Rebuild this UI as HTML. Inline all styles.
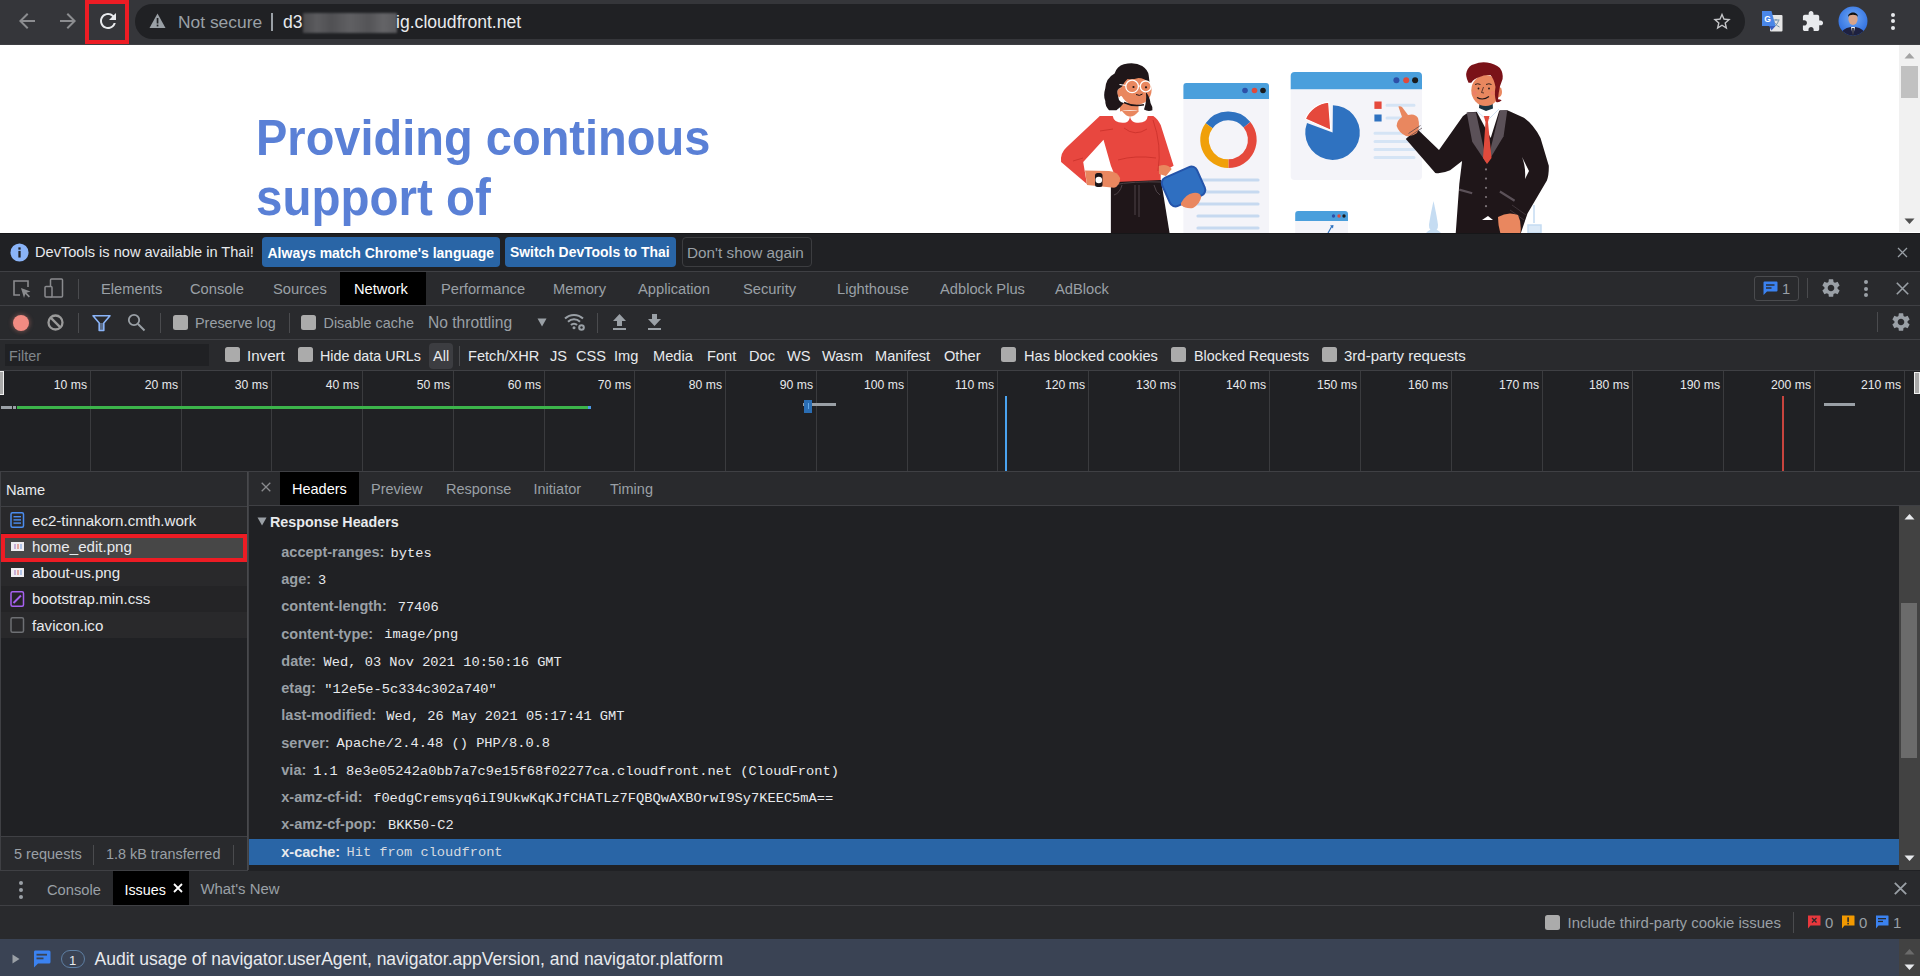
<!DOCTYPE html>
<html><head><meta charset="utf-8"><style>
html,body{margin:0;padding:0;width:1920px;height:976px;overflow:hidden;background:#202124;}
.t{position:absolute;white-space:pre;line-height:1;font-family:"Liberation Sans",sans-serif;}
.r{position:absolute;}
svg.r{display:block;overflow:visible;}
</style></head><body>
<div class="r" style="left:0px;top:0px;width:1920px;height:45px;background:#35363a;"></div>
<div class="r" style="left:0px;top:44px;width:1920px;height:1px;background:#3e3f43;"></div>
<div class="r" style="left:135px;top:4px;width:1610px;height:34.5px;background:#202124;border-radius:17.25px;"></div>
<div class="r" style="left:85px;top:0px;width:44px;height:44px;background:transparent;border:4px solid #ed1c24;box-sizing:border-box;"></div>
<svg class="r" style="left:15px;top:9px" width="24" height="24" viewBox="0 0 24 24"><path d="M20 11H7.83l5.59-5.59L12 4l-8 8 8 8 1.41-1.41L7.83 13H20v-2z" fill="#8c8d90"/></svg>
<svg class="r" style="left:56px;top:9px" width="24" height="24" viewBox="0 0 24 24"><path d="M4 11h12.17l-5.59-5.59L12 4l8 8-8 8-1.41-1.41L16.17 13H4v-2z" fill="#8c8d90"/></svg>
<svg class="r" style="left:95.5px;top:9px" width="24" height="24" viewBox="0 0 24 24"><path d="M17.65 6.35A7.958 7.958 0 0 0 12 4c-4.42 0-7.99 3.58-7.99 8s3.57 8 7.99 8c3.73 0 6.84-2.55 7.73-6h-2.08A5.99 5.99 0 0 1 12 18c-3.31 0-6-2.69-6-6s2.69-6 6-6c1.66 0 3.14.69 4.22 1.78L13 11h7V4l-2.35 2.35z" fill="#e8eaed"/></svg>
<svg class="r" style="left:149px;top:13px" width="17" height="16" viewBox="0 0 17 16"><path d="M8.5 0.5 L16.5 15 H0.5 Z" fill="#9aa0a6"/><rect x="7.7" y="5" width="1.7" height="5.5" fill="#202124"/><rect x="7.7" y="11.6" width="1.7" height="1.8" fill="#202124"/></svg>
<div class="t" style="left:178px;top:14.07px;font-size:17.4px;color:#9aa0a6;font-weight:normal;font-family:'Liberation Sans', sans-serif;">Not secure</div>
<div class="r" style="left:271px;top:13px;width:1.5px;height:18px;background:#9aa0a6;"></div>
<div class="t" style="left:283px;top:13.90px;font-size:17.6px;color:#e8eaed;font-weight:normal;font-family:'Liberation Sans', sans-serif;">d3</div>
<div class="r" style="left:303px;top:13px;width:94px;height:20px;background:linear-gradient(90deg,#4a4a4d,#5c5c5f 15%,#505053 30%,#606063 50%,#545457 70%,#646467 85%,#5a5a5d);filter:blur(1.2px);"></div>
<div class="t" style="left:396px;top:13.90px;font-size:17.6px;color:#e8eaed;font-weight:normal;font-family:'Liberation Sans', sans-serif;">ig.cloudfront.net</div>
<svg class="r" style="left:1711px;top:11px" width="22" height="21" viewBox="0 0 24 24"><path d="M22 9.24l-7.19-.62L12 2 9.19 8.63 2 9.24l5.46 4.73L5.82 21 12 17.27 18.18 21l-1.63-7.03L22 9.24zM12 15.4l-3.76 2.27 1-4.28-3.32-2.88 4.38-.38L12 6.1l1.71 4.04 4.38.38-3.32 2.88 1 4.28L12 15.4z" fill="#c4c5c8"/></svg>
<svg class="r" style="left:1762px;top:11px" width="21" height="21" viewBox="0 0 21 21"><rect x="8" y="4" width="12.5" height="16.5" fill="#e6e6e6" rx="1"/><path d="M10.5 9 h7 M14 8v1.5 M11.5 9.5c1 3 3 5 6 6.5 M16.5 9.5c-.8 3-2.5 5.2-5 6.5" stroke="#6b8ca3" stroke-width="1" fill="none"/><path d="M0 0 H9.5 L13.5 15 H0 Z" fill="#4a87e8"/><path d="M7 15 L13.5 15 L9.5 19.5 Z" fill="#3a5fc0"/><text x="2.2" y="11" font-family="Liberation Sans" font-weight="bold" font-size="8.5" fill="#fff">G</text></svg>
<svg class="r" style="left:1801px;top:10px" width="23" height="23" viewBox="0 0 24 24"><path d="M20.5 11H19V7c0-1.1-.9-2-2-2h-4V3.5C13 2.12 11.88 1 10.5 1S8 2.12 8 3.5V5H4c-1.1 0-1.99.9-1.99 2v3.8H3.5c1.49 0 2.7 1.21 2.7 2.7s-1.21 2.7-2.7 2.7H2V20c0 1.1.9 2 2 2h3.8v-1.5c0-1.49 1.21-2.7 2.7-2.7 1.49 0 2.7 1.21 2.7 2.7V22H17c1.1 0 2-.9 2-2v-4h1.5c1.38 0 2.5-1.12 2.5-2.5S21.88 11 20.5 11z" fill="#e8eaed"/></svg>
<svg class="r" style="left:1838px;top:6px" width="30" height="30" viewBox="0 0 30 30"><defs><radialGradient id="av" cx="50%" cy="40%" r="60%"><stop offset="0" stop-color="#6fa8f5"/><stop offset="1" stop-color="#2f6fe0"/></radialGradient><clipPath id="avc"><circle cx="15" cy="15" r="14.5"/></clipPath></defs><circle cx="15" cy="15" r="14.5" fill="url(#av)"/><g clip-path="url(#avc)"><path d="M2 30 C4 23 9 21 15 21 C21 21 26 23 28 30Z" fill="#1e2140"/><path d="M13 21 L15 30 L17 21Z" fill="#f4f4f4"/><rect x="14.2" y="22" width="1.6" height="8" fill="#1a1a2a"/><ellipse cx="15" cy="13" rx="4.6" ry="6" fill="#d9a58a"/><path d="M10 11 C10 5 20 5 20 11 C19 8 11 8 10 11Z" fill="#111"/></g></svg>
<div class="r" style="left:1890.5px;top:12.7px;width:4px;height:4px;background:#e8eaed;border-radius:50%;"></div>
<div class="r" style="left:1890.5px;top:19.2px;width:4px;height:4px;background:#e8eaed;border-radius:50%;"></div>
<div class="r" style="left:1890.5px;top:25.7px;width:4px;height:4px;background:#e8eaed;border-radius:50%;"></div>
<div class="r" style="left:0px;top:45px;width:1920px;height:188px;background:#ffffff;"></div>
<div class="r" style="left:1899px;top:45px;width:21px;height:187px;background:#f1f1f1;"></div>
<div class="r" style="left:1901px;top:66px;width:17px;height:32px;background:#c1c1c1;"></div>
<svg class="r" style="left:1904px;top:52px" width="11" height="7" viewBox="0 0 11 7"><path d="M0.5 6.5 L5.5 1 L10.5 6.5Z" fill="#a3a3a3"/></svg>
<svg class="r" style="left:1904px;top:218px" width="11" height="7" viewBox="0 0 11 7"><path d="M0.5 0.5 L5.5 6 L10.5 0.5Z" fill="#505050"/></svg>
<div class="t" style="left:256px;top:115.21px;font-size:47px;color:#5a80d6;font-weight:bold;font-family:'Liberation Sans', sans-serif;transform:scaleY(1.08);transform-origin:0 39.8px;">Providing continous</div>
<div class="t" style="left:256px;top:174.79px;font-size:47.5px;color:#5a80d6;font-weight:bold;font-family:'Liberation Sans', sans-serif;transform:scaleY(1.08);transform-origin:0 40.2px;">support of</div>
<svg class="r" style="left:1040px;top:45px" width="520" height="188" viewBox="0 0 520 188">
<defs><clipPath id="pg"><rect x="0" y="0" width="520" height="188"/></clipPath></defs>
<g clip-path="url(#pg)">
<!-- panel 1 -->
<path d="M143.4 41 Q143.4 38 146.4 38 H226 Q229 38 229 41 V54 H143.4Z" fill="#4a9fdc"/>
<rect x="143.4" y="54" width="85.6" height="140" fill="#f4f4f9"/>
<circle cx="205" cy="45.5" r="2.8" fill="#2d50a8"/><circle cx="214.5" cy="45.5" r="2.8" fill="#e04a3c"/><circle cx="223" cy="45.5" r="2.8" fill="#1b1b1b"/>
<path d="M169.1 80.8 A23.9 23.9 0 0 1 207 79.8" stroke="#2f72c0" stroke-width="8.7" fill="none"/>
<path d="M207 79.8 A23.9 23.9 0 0 1 188.4 118.7" stroke="#e5493c" stroke-width="8.7" fill="none"/>
<path d="M188.4 118.7 A23.9 23.9 0 0 1 169.1 80.8" stroke="#f0a00a" stroke-width="8.7" fill="none"/>
<g stroke="#c6d9f0" stroke-width="3.2" stroke-linecap="round"><path d="M158 135H218M158 147H218M158 159H218M158 171H218M158 183H218"/></g>
<!-- panel 2 -->
<path d="M250.7 31 Q250.7 27 254.7 27 H378 Q382 27 382 31 V44.4 H250.7Z" fill="#4a9fdc"/>
<path d="M250.7 44.4 H382 V131 Q382 135 378 135 H254.7 Q250.7 135 250.7 131Z" fill="#f4f4f9"/>
<circle cx="356.4" cy="35.2" r="3" fill="#2d50a8"/><circle cx="366.2" cy="35.2" r="3" fill="#e04a3c"/><circle cx="375.1" cy="35.2" r="3" fill="#1b1b1b"/>
<path d="M292.6 87.6 L292.9 60.3 A27.3 27.3 0 1 1 267.0 78.0 Z" fill="#2f72c0"/>
<path d="M290.8 85.3 L288.7 57.2 A28 28 0 0 0 265.3 74 Z" fill="#e5493c" stroke="#fff" stroke-width="1.2"/>
<rect x="334.4" y="56.5" width="7.2" height="7.4" fill="#e5493c"/><rect x="334.4" y="69.5" width="7.2" height="7" fill="#2f72c0"/>
<g stroke="#d5e4f5" stroke-width="3" stroke-linecap="round"><path d="M347 60.3H374M347 73H374M335 88.2H374M335 96.4H374M335 104.6H374M335 112.5H374"/></g>
<!-- bottom small panel -->
<path d="M255.2 169 Q255.2 166 258.2 166 H305 Q308 166 308 169 V176 H255.2Z" fill="#4a9fdc"/>
<rect x="255.2" y="176" width="52.8" height="14" fill="#f4f4f9"/>
<circle cx="293.5" cy="171" r="1.7" fill="#2d50a8"/><circle cx="299" cy="171" r="1.7" fill="#e04a3c"/><circle cx="304" cy="171" r="1.7" fill="#1b1b1b"/>
<path d="M288 188 L292 181" stroke="#2f72c0" stroke-width="1.2"/><path d="M290 180.5 L293.5 180 L293 183.5Z" fill="#2f72c0"/>
<!-- light blue decorations -->
<path d="M393.5 156 Q390 172 389 180 Q389 186 393.5 186 Q398 186 398 180 Q397 172 393.5 156Z" fill="#c5dcf2"/>
<path d="M386 188 Q393.5 180 401 188Z" fill="#c5dcf2"/>
<path d="M494 160 V178 M488 180 H501 V188 H488 Z" stroke="#c5dcf2" stroke-width="1.5" fill="#dbe9f7"/>
<!-- woman -->
<path d="M80 58 H98.5 V74.6 H80Z" fill="#e9875f"/>
<ellipse cx="96" cy="45" rx="15.6" ry="14.8" fill="#e9875f"/>
<ellipse cx="80.5" cy="47.8" rx="3.3" ry="4.6" fill="#e9875f"/>
<path d="M65.3 43.2 Q66 33 74.6 28.4 Q77 21 83.8 19.2 Q95 16.5 102.2 21.1 Q108 25 108.7 30.3 L109.6 37.7 Q104 33 98.5 33 Q92 35 87.5 34 Q84 37 82 41.4 L80.1 43 Q77 44 77.3 48 L79 55 Q81 58 83.8 58 Q80 63 76.4 65.3 L69 65.3 Q65 61 65.3 56.1 Q63 51 65.3 43.2Z" fill="#1f1619"/>
<path d="M105.9 46.9 Q110 52 110.5 58 Q113 62 112.4 65.3 Q108 67 104 64.5 Q107 56 105.9 46.9Z" fill="#1f1619"/>
<circle cx="92.1" cy="41.4" r="6.3" fill="none" stroke="#fff" stroke-width="1.3"/><circle cx="105.7" cy="41.4" r="5.4" fill="none" stroke="#fff" stroke-width="1.3"/>
<path d="M85.8 40.5 L79.5 39.5 M98.4 41 L100.3 41" stroke="#fff" stroke-width="1.1"/>
<circle cx="93.5" cy="42" r="1.1" fill="#1f1619"/><circle cx="106" cy="42.3" r="1.1" fill="#1f1619"/>
<path d="M96 49.5 Q99.5 51.5 102.5 49" stroke="#1f1619" stroke-width="1" fill="none"/>
<path d="M84 57.5 Q93 62 104 59.8" stroke="#1f1619" stroke-width="1.5" fill="none"/>
<circle cx="81" cy="52.2" r="1.2" fill="#fff"/>
<path d="M59.8 70.9 L113.3 70.9 Q118 74 120.7 80.1 L133.6 120.7 L120.7 128 L120.7 137.3 L78.2 139.1 L70.9 120.7 L63.5 94.8 L43.2 117 L46.9 139.1 L21.1 117 Q20 108 26.6 102.2Z" fill="#e8473f"/>
<path d="M84 83 Q95 92 107 84 M78 115 Q95 110 116 113 M113 75 Q122 100 118 126 M60 86 L73 84 M33 116 L43 113" stroke="#c9302a" stroke-width=".8" fill="none"/>
<path d="M72.7 71 Q74 79 86 77.5 Q90 76 90 70 Q90 76 95 77.5 Q107 79 107.7 71 Q103 65.3 90 65.3 Q77 65.3 72.7 71Z" fill="#fff"/>
<path d="M82 66 Q90 77 99 66Z" fill="#e9875f"/>
<path d="M70.9 137.3 L121 135 L129.9 190 L70.9 190Z" fill="#1f1619"/>
<path d="M72 140 Q95 136 121 137" stroke="#4d4246" stroke-width="1" fill="none"/>
<path d="M99 140 V172 M95 140 V170 M74 150 Q80 148 82 140 M114 140 Q116 148 120 150" stroke="#5a4f54" stroke-width=".8" fill="none"/>
<path d="M45 125.5 L69 126 Q78 127 80.1 133 Q80 141 74 142.8 L47 140Z" fill="#e9875f"/>
<rect x="55" y="128" width="7.5" height="14" rx="2.5" fill="#1f1619"/><circle cx="58.8" cy="135" r="3.3" fill="#fff"/>
<g transform="rotate(-24 143.5 141.5)"><rect x="124.5" y="126" width="38" height="31" rx="6" fill="#2f6fc1" stroke="#2454aa" stroke-width="2"/></g>
<path d="M118.8 121 Q127 118 131.7 124 L126 131 L119 129Z" fill="#e9875f"/>
<path d="M141 158 Q146 149 153 148 Q160 147 161.2 152 Q160 159 153 163 Q146 164 141 160Z" fill="#e9875f"/>
<!-- man -->
<path d="M376.9 83.8 L399 105 L423 70.9 L428.5 67.2 L467.3 65.3 L483.9 72.7 Q494 80 500.5 93 L508.8 120.7 Q509 130 506.9 135.4 L487.5 168.6 L480.2 190 L415.6 190 L419.3 139.1 L422.1 116 L410.1 125.3 Q402 129 395.3 128 L365.8 93.9Z" fill="#1f1619"/>
<path d="M482 112 Q486 122 485 134 L489 126Z" fill="#ffffff"/>
<path d="M435.9 65.3 L459.9 63.5 L450.7 93Z" fill="#ffffff"/>
<path d="M436.5 66 L446 74 M459 64 L449 74" stroke="#bcd3ec" stroke-width=".7" fill="none"/>
<path d="M426.7 67.2 L435.9 67.2 L447 118.8 L432.2 96.7Z" fill="#5b5158"/>
<path d="M459.9 65.3 L467.3 65.3 L463.6 91.2 L447 118.8Z" fill="#5b5158"/>
<path d="M443.8 71 L449.5 71 L448 77 L451.5 113 L447 119 L443 113 L445.5 77Z" fill="#e04a3c"/>
<path d="M439.6 56 H452.5 L453 63.5 L446 66 L439 63Z" fill="#1b3340"/>
<ellipse cx="445.6" cy="45.5" rx="14.3" ry="15.5" fill="#e9875f"/>
<ellipse cx="458.8" cy="46.9" rx="3.2" ry="5.2" fill="#e9875f"/>
<path d="M428.5 37.7 Q425 31 426.7 26.6 Q429 20 434.1 19.2 Q440 16.5 447 17.4 Q455 18.5 459.9 22.9 Q463.5 28 462.6 34 L459.9 41.5 Q458.5 48 458 54.3 Q460 54.5 461.7 55.2 Q459 58 456.2 57 Q454 50 455.5 42 Q454 34 450.7 30.3 Q445 29.5 439.6 32.1 Q434 34 431.3 37.7Z" fill="#7a1218"/>
<path d="M437 52.5 Q443 56 449 51.5" stroke="#1f1619" stroke-width="1.1" fill="none"/>
<path d="M435 39.5 Q437.5 38 440.5 39.5 M446 39.5 Q449 38 451.5 39.5" stroke="#1f1619" stroke-width=".9" fill="none"/>
<circle cx="438.5" cy="43.5" r=".9" fill="#1f1619"/><circle cx="449" cy="43.5" r=".9" fill="#1f1619"/>
<path d="M443.5 42 L441.5 47.5 L444 48" stroke="#1f1619" stroke-width=".7" fill="none"/>
<circle cx="434.5" cy="48" r="2" fill="#f07a6a" opacity=".6"/><circle cx="452.5" cy="48" r="2" fill="#f07a6a" opacity=".6"/>
<path d="M358.4 61.6 Q360 60.5 362 62 L368 70 Q375 68 378 73 Q380.5 82 377 88 Q372 92 366 91 Q359 88 356.6 81 Q357 75 362 72Z" fill="#e9875f"/>
<path d="M368.5 88.5 L380.5 80.5 M370 91 L382 83" stroke="#4d4246" stroke-width=".7" fill="none"/>
<path d="M419.3 144.6 L432.2 148.3 M459.9 146.5 L474.6 155.7" stroke="#5b5158" stroke-width="2.2"/>
<g fill="#7d7479"><circle cx="446" cy="124.4" r="1.1"/><circle cx="446" cy="133.6" r="1.1"/><circle cx="446" cy="142.8" r="1.1"/><circle cx="446" cy="152" r="1.1"/><circle cx="446" cy="161.2" r="1.1"/></g>
<path d="M442 175 L448 171 L453 175Z" fill="#ffffff"/>
<path d="M472 160 L486 170 M470 165 L484 175" stroke="#4d4246" stroke-width=".7" fill="none"/>
<path d="M458 172 Q468 166 478 170 Q482 178 480.2 190 L461 190 Q458 182 458 172Z" fill="#e9875f"/>
</g>
</svg>

<div class="r" style="left:0px;top:233px;width:1920px;height:38px;background:#202124;"></div>
<div class="r" style="left:0px;top:233px;width:1920px;height:1px;background:#161618;"></div>
<div class="r" style="left:0px;top:271px;width:1920px;height:1px;background:#3f4044;"></div>
<svg class="r" style="left:10px;top:243px" width="19" height="19" viewBox="0 0 20 20"><circle cx="10" cy="10" r="9.5" fill="#8ab4f8"/><rect x="8.8" y="8.3" width="2.4" height="7" fill="#202124"/><rect x="8.8" y="4.6" width="2.4" height="2.4" fill="#202124"/></svg>
<div class="t" style="left:35px;top:245.14px;font-size:14.6px;color:#e8eaed;font-weight:normal;font-family:'Liberation Sans', sans-serif;">DevTools is now available in Thai!</div>
<div class="r" style="left:262px;top:237px;width:238px;height:30px;background:#2965a6;border-radius:4px;"></div>
<div class="t" style="left:267.5px;top:245.65px;font-size:14.0px;color:#ffffff;font-weight:bold;font-family:'Liberation Sans', sans-serif;">Always match Chrome's language</div>
<div class="r" style="left:505px;top:237px;width:171px;height:30px;background:#2965a6;border-radius:4px;"></div>
<div class="t" style="left:510px;top:245.73px;font-size:13.9px;color:#ffffff;font-weight:bold;font-family:'Liberation Sans', sans-serif;">Switch DevTools to Thai</div>
<div class="r" style="left:681.5px;top:237px;width:130px;height:30px;background:transparent;border:1px solid #3c3d40;border-radius:4px;box-sizing:border-box;"></div>
<div class="t" style="left:687px;top:244.55px;font-size:15.3px;color:#9aa0a6;font-weight:normal;font-family:'Liberation Sans', sans-serif;">Don't show again</div>
<svg class="r" style="left:1897px;top:247px" width="11" height="11" viewBox="0 0 11 11"><path d="M1 1L10 10M10 1L1 10" stroke="#9aa0a6" stroke-width="1.3"/></svg>
<div class="r" style="left:0px;top:272px;width:1920px;height:33px;background:#292a2d;"></div>
<div class="r" style="left:0px;top:305px;width:1920px;height:1px;background:#3f4044;"></div>
<svg class="r" style="left:12px;top:279px" width="20" height="20" viewBox="0 0 20 20"><path d="M8 16H2V2h14v6" stroke="#8a8b8e" stroke-width="1.6" fill="none"/><path d="M9 9 L18.5 12.5 L14.5 13.8 L18 17.3 L16.8 18.5 L13.3 15 L12 19 Z" fill="#8a8b8e"/></svg>
<svg class="r" style="left:44px;top:278px" width="20" height="20" viewBox="0 0 20 20"><rect x="6.5" y="1" width="12" height="18" rx="1" stroke="#8a8b8e" stroke-width="1.5" fill="none"/><rect x="1" y="8.5" width="7" height="10.5" rx="1" stroke="#8a8b8e" stroke-width="1.5" fill="#292a2d"/></svg>
<div class="r" style="left:78px;top:279px;width:1px;height:20px;background:#4a4b4e;"></div>
<div class="r" style="left:340px;top:272px;width:86px;height:33px;background:#000000;"></div>
<div class="t" style="left:101px;top:281.86px;font-size:14.7px;color:#9aa0a6;font-weight:normal;font-family:'Liberation Sans', sans-serif;">Elements</div>
<div class="t" style="left:190px;top:281.86px;font-size:14.7px;color:#9aa0a6;font-weight:normal;font-family:'Liberation Sans', sans-serif;">Console</div>
<div class="t" style="left:273px;top:281.86px;font-size:14.7px;color:#9aa0a6;font-weight:normal;font-family:'Liberation Sans', sans-serif;">Sources</div>
<div class="t" style="left:354px;top:281.86px;font-size:14.7px;color:#ffffff;font-weight:normal;font-family:'Liberation Sans', sans-serif;">Network</div>
<div class="t" style="left:441px;top:281.86px;font-size:14.7px;color:#9aa0a6;font-weight:normal;font-family:'Liberation Sans', sans-serif;">Performance</div>
<div class="t" style="left:553px;top:281.86px;font-size:14.7px;color:#9aa0a6;font-weight:normal;font-family:'Liberation Sans', sans-serif;">Memory</div>
<div class="t" style="left:638px;top:281.86px;font-size:14.7px;color:#9aa0a6;font-weight:normal;font-family:'Liberation Sans', sans-serif;">Application</div>
<div class="t" style="left:743px;top:281.86px;font-size:14.7px;color:#9aa0a6;font-weight:normal;font-family:'Liberation Sans', sans-serif;">Security</div>
<div class="t" style="left:837px;top:281.86px;font-size:14.7px;color:#9aa0a6;font-weight:normal;font-family:'Liberation Sans', sans-serif;">Lighthouse</div>
<div class="t" style="left:940px;top:281.86px;font-size:14.7px;color:#9aa0a6;font-weight:normal;font-family:'Liberation Sans', sans-serif;">Adblock Plus</div>
<div class="t" style="left:1055px;top:281.86px;font-size:14.7px;color:#9aa0a6;font-weight:normal;font-family:'Liberation Sans', sans-serif;">AdBlock</div>
<div class="r" style="left:1754px;top:276px;width:45px;height:25px;background:transparent;border:1px solid #4a4b4e;border-radius:3px;box-sizing:border-box;"></div>
<svg class="r" style="left:1763px;top:281px" width="15" height="15" viewBox="0 0 15 15"><path d="M1.5 0.5 H13.5 A1 1 0 0 1 14.5 1.5 V9.5 A1 1 0 0 1 13.5 10.5 H4 L0.5 14 V1.5 A1 1 0 0 1 1.5 0.5Z" fill="#3b82f0"/><rect x="3" y="3.3" width="8.5" height="1.4" fill="#292a2d"/><rect x="3" y="6.3" width="5.5" height="1.4" fill="#292a2d"/></svg>
<div class="t" style="left:1782px;top:282.06px;font-size:14.7px;color:#9aa0a6;font-weight:normal;font-family:'Liberation Sans', sans-serif;">1</div>
<div class="r" style="left:1806.5px;top:278px;width:1.3px;height:20px;background:#4a4b4e;"></div>
<svg class="r" style="left:1819.5px;top:277px" width="22" height="22" viewBox="0 0 24 24"><path d="M19.14 12.94c.04-.3.06-.61.06-.94 0-.32-.02-.64-.07-.94l2.03-1.58a.49.49 0 0 0 .12-.61l-1.92-3.32a.488.488 0 0 0-.59-.22l-2.39.96c-.5-.38-1.03-.7-1.62-.94l-.36-2.54a.484.484 0 0 0-.48-.41h-3.84c-.24 0-.43.17-.47.41l-.36 2.54c-.59.24-1.13.57-1.62.94l-2.39-.96c-.22-.08-.47 0-.59.22L2.74 8.87c-.12.21-.08.47.12.61l2.03 1.58c-.05.3-.09.63-.09.94s.02.64.07.94l-2.03 1.58a.49.49 0 0 0-.12.61l1.92 3.32c.12.22.37.29.59.22l2.39-.96c.5.38 1.03.7 1.62.94l.36 2.54c.05.24.24.41.48.41h3.84c.24 0 .44-.17.47-.41l.36-2.54c.59-.24 1.13-.56 1.62-.94l2.39.96c.22.08.47 0 .59-.22l1.92-3.32c.12-.22.07-.47-.12-.61l-2.01-1.58zM12 15.6c-1.98 0-3.6-1.62-3.6-3.6s1.62-3.6 3.6-3.6 3.6 1.62 3.6 3.6-1.62 3.6-3.6 3.6z" fill="#9aa0a6"/></svg>
<div class="r" style="left:1864px;top:280px;width:4px;height:4px;background:#9aa0a6;border-radius:50%;"></div>
<div class="r" style="left:1864px;top:286.5px;width:4px;height:4px;background:#9aa0a6;border-radius:50%;"></div>
<div class="r" style="left:1864px;top:293px;width:4px;height:4px;background:#9aa0a6;border-radius:50%;"></div>
<svg class="r" style="left:1896px;top:282px" width="13" height="13" viewBox="0 0 13 13"><path d="M0.8 0.8L12.2 12.2M12.2 0.8L0.8 12.2" stroke="#9aa0a6" stroke-width="1.6"/></svg>
<div class="r" style="left:0px;top:306px;width:1920px;height:33px;background:#292a2d;"></div>
<div class="r" style="left:0px;top:339px;width:1920px;height:1px;background:#3f4044;"></div>
<div class="r" style="left:12.5px;top:314.5px;width:16px;height:16px;background:#f28b82;border-radius:50%;box-shadow:0 0 4px 1px rgba(242,139,130,.35);"></div>
<svg class="r" style="left:47px;top:314px" width="17" height="17" viewBox="0 0 17 17"><circle cx="8.5" cy="8.5" r="7" stroke="#9a9a9a" stroke-width="2.3" fill="none"/><path d="M3.6 3.6L13.4 13.4" stroke="#9a9a9a" stroke-width="2.3"/></svg>
<div class="r" style="left:78px;top:313px;width:1px;height:20px;background:#4a4b4e;"></div>
<svg class="r" style="left:92px;top:314px" width="19" height="18" viewBox="0 0 19 18"><path d="M7.5 9 H11.5 V16.3 H7.5Z" fill="#5b6d8a"/><path d="M1 1.8 H18 L11.8 9 V16.5 H7.2 V9 Z" stroke="#8ab4f8" stroke-width="1.6" fill="none" stroke-linejoin="round"/></svg>
<svg class="r" style="left:127px;top:313px" width="19" height="19" viewBox="0 0 19 19"><circle cx="7" cy="7" r="5.2" stroke="#9aa0a6" stroke-width="1.8" fill="none"/><path d="M11 11L17.5 17.5" stroke="#9aa0a6" stroke-width="2"/></svg>
<div class="r" style="left:159.5px;top:313px;width:1px;height:20px;background:#4a4b4e;"></div>
<div class="r" style="left:173px;top:315px;width:15px;height:15px;background:#ababab;border-radius:2.5px;"></div>
<div class="t" style="left:195px;top:316.41px;font-size:14.4px;color:#9aa0a6;font-weight:normal;font-family:'Liberation Sans', sans-serif;">Preserve log</div>
<div class="r" style="left:288.5px;top:313px;width:1px;height:20px;background:#4a4b4e;"></div>
<div class="r" style="left:301px;top:315px;width:15px;height:15px;background:#ababab;border-radius:2.5px;"></div>
<div class="t" style="left:323.5px;top:316.41px;font-size:14.4px;color:#9aa0a6;font-weight:normal;font-family:'Liberation Sans', sans-serif;">Disable cache</div>
<div class="t" style="left:428px;top:315.39px;font-size:15.6px;color:#9aa0a6;font-weight:normal;font-family:'Liberation Sans', sans-serif;">No throttling</div>
<svg class="r" style="left:537px;top:318px" width="10" height="9" viewBox="0 0 10 9"><path d="M0.5 0.5H9.5L5 8.5Z" fill="#9aa0a6"/></svg>
<svg class="r" style="left:564px;top:312px" width="22" height="20" viewBox="0 0 22 20"><path d="M1 6.5 A13 13 0 0 1 19 6.5" stroke="#9aa0a6" stroke-width="2" fill="none"/><path d="M4 9.8 A8.5 8.5 0 0 1 16 9.8" stroke="#9aa0a6" stroke-width="2" fill="none"/><path d="M7 13 A4 4 0 0 1 13 13" stroke="#9aa0a6" stroke-width="2" fill="none"/><circle cx="10" cy="15.8" r="1.5" fill="#9aa0a6"/><circle cx="17.5" cy="15.5" r="3.3" fill="#9aa0a6"/><circle cx="17.5" cy="15.5" r="1.2" fill="#292a2d"/></svg>
<div class="r" style="left:596.5px;top:313px;width:1px;height:20px;background:#4a4b4e;"></div>
<svg class="r" style="left:612px;top:313px" width="15" height="18" viewBox="0 0 15 18"><path d="M7.5 1 L14 8 H10 V13 H5 V8 H1Z" fill="#9aa0a6"/><rect x="1" y="15" width="13" height="2" fill="#9aa0a6"/></svg>
<svg class="r" style="left:647px;top:313px" width="15" height="18" viewBox="0 0 15 18"><path d="M7.5 13 L14 6 H10 V1 H5 V6 H1Z" fill="#9aa0a6"/><rect x="1" y="15" width="13" height="2" fill="#9aa0a6"/></svg>
<div class="r" style="left:1876.5px;top:312px;width:1.3px;height:20px;background:#4a4b4e;"></div>
<svg class="r" style="left:1889.5px;top:311px" width="22" height="22" viewBox="0 0 24 24"><path d="M19.14 12.94c.04-.3.06-.61.06-.94 0-.32-.02-.64-.07-.94l2.03-1.58a.49.49 0 0 0 .12-.61l-1.92-3.32a.488.488 0 0 0-.59-.22l-2.39.96c-.5-.38-1.03-.7-1.62-.94l-.36-2.54a.484.484 0 0 0-.48-.41h-3.84c-.24 0-.43.17-.47.41l-.36 2.54c-.59.24-1.13.57-1.62.94l-2.39-.96c-.22-.08-.47 0-.59.22L2.74 8.87c-.12.21-.08.47.12.61l2.03 1.58c-.05.3-.09.63-.09.94s.02.64.07.94l-2.03 1.58a.49.49 0 0 0-.12.61l1.92 3.32c.12.22.37.29.59.22l2.39-.96c.5.38 1.03.7 1.62.94l.36 2.54c.05.24.24.41.48.41h3.84c.24 0 .44-.17.47-.41l.36-2.54c.59-.24 1.13-.56 1.62-.94l2.39.96c.22.08.47 0 .59-.22l1.92-3.32c.12-.22.07-.47-.12-.61l-2.01-1.58zM12 15.6c-1.98 0-3.6-1.62-3.6-3.6s1.62-3.6 3.6-3.6 3.6 1.62 3.6 3.6-1.62 3.6-3.6 3.6z" fill="#9aa0a6"/></svg>
<div class="r" style="left:0px;top:340px;width:1920px;height:31px;background:#292a2d;"></div>
<div class="r" style="left:0px;top:370px;width:1920px;height:1px;background:#3f4044;"></div>
<div class="r" style="left:5px;top:343.5px;width:204px;height:22px;background:#202124;"></div>
<div class="t" style="left:9px;top:348.81px;font-size:14.4px;color:#80868b;font-weight:normal;font-family:'Liberation Sans', sans-serif;">Filter</div>
<div class="r" style="left:225px;top:347px;width:15px;height:15px;background:#ababab;border-radius:2.5px;"></div>
<div class="t" style="left:247px;top:348.22px;font-size:15.1px;color:#e8eaed;font-weight:normal;font-family:'Liberation Sans', sans-serif;">Invert</div>
<div class="r" style="left:298px;top:347px;width:15px;height:15px;background:#ababab;border-radius:2.5px;"></div>
<div class="t" style="left:320px;top:348.90px;font-size:14.3px;color:#e8eaed;font-weight:normal;font-family:'Liberation Sans', sans-serif;">Hide data URLs</div>
<div class="r" style="left:429px;top:343px;width:24px;height:26px;background:#3c3d41;border-radius:4px;"></div>
<div class="t" style="left:433px;top:349.23px;font-size:14.5px;color:#e8eaed;font-weight:normal;font-family:'Liberation Sans', sans-serif;">All</div>
<div class="r" style="left:458.5px;top:346px;width:1px;height:20px;background:#4a4b4e;"></div>
<div class="t" style="left:468px;top:349.14px;font-size:14.6px;color:#e8eaed;font-weight:normal;font-family:'Liberation Sans', sans-serif;">Fetch/XHR</div>
<div class="t" style="left:550px;top:349.14px;font-size:14.6px;color:#e8eaed;font-weight:normal;font-family:'Liberation Sans', sans-serif;">JS</div>
<div class="t" style="left:576px;top:349.14px;font-size:14.6px;color:#e8eaed;font-weight:normal;font-family:'Liberation Sans', sans-serif;">CSS</div>
<div class="t" style="left:614px;top:349.14px;font-size:14.6px;color:#e8eaed;font-weight:normal;font-family:'Liberation Sans', sans-serif;">Img</div>
<div class="t" style="left:653px;top:349.14px;font-size:14.6px;color:#e8eaed;font-weight:normal;font-family:'Liberation Sans', sans-serif;">Media</div>
<div class="t" style="left:707px;top:349.14px;font-size:14.6px;color:#e8eaed;font-weight:normal;font-family:'Liberation Sans', sans-serif;">Font</div>
<div class="t" style="left:749px;top:349.14px;font-size:14.6px;color:#e8eaed;font-weight:normal;font-family:'Liberation Sans', sans-serif;">Doc</div>
<div class="t" style="left:787px;top:349.14px;font-size:14.6px;color:#e8eaed;font-weight:normal;font-family:'Liberation Sans', sans-serif;">WS</div>
<div class="t" style="left:822px;top:349.14px;font-size:14.6px;color:#e8eaed;font-weight:normal;font-family:'Liberation Sans', sans-serif;">Wasm</div>
<div class="t" style="left:875px;top:349.14px;font-size:14.6px;color:#e8eaed;font-weight:normal;font-family:'Liberation Sans', sans-serif;">Manifest</div>
<div class="t" style="left:944px;top:349.14px;font-size:14.6px;color:#e8eaed;font-weight:normal;font-family:'Liberation Sans', sans-serif;">Other</div>
<div class="r" style="left:1001px;top:347px;width:15px;height:15px;background:#ababab;border-radius:2.5px;"></div>
<div class="t" style="left:1024px;top:348.64px;font-size:14.6px;color:#e8eaed;font-weight:normal;font-family:'Liberation Sans', sans-serif;">Has blocked cookies</div>
<div class="r" style="left:1171px;top:347px;width:15px;height:15px;background:#ababab;border-radius:2.5px;"></div>
<div class="t" style="left:1194px;top:348.90px;font-size:14.3px;color:#e8eaed;font-weight:normal;font-family:'Liberation Sans', sans-serif;">Blocked Requests</div>
<div class="r" style="left:1322px;top:347px;width:15px;height:15px;background:#ababab;border-radius:2.5px;"></div>
<div class="t" style="left:1344px;top:348.30px;font-size:15.0px;color:#e8eaed;font-weight:normal;font-family:'Liberation Sans', sans-serif;">3rd-party requests</div>
<div class="r" style="left:0px;top:371px;width:1920px;height:100px;background:#202124;"></div>
<div class="r" style="left:0px;top:471px;width:1920px;height:1px;background:#3f4044;"></div>
<div class="r" style="left:90px;top:371px;width:1px;height:100px;background:#3a3b3e;"></div>
<div class="t" style="right:1833px;top:378.67px;font-size:12.2px;color:#e8eaed;">10 ms</div>
<div class="r" style="left:181px;top:371px;width:1px;height:100px;background:#3a3b3e;"></div>
<div class="t" style="right:1742px;top:378.67px;font-size:12.2px;color:#e8eaed;">20 ms</div>
<div class="r" style="left:271px;top:371px;width:1px;height:100px;background:#3a3b3e;"></div>
<div class="t" style="right:1652px;top:378.67px;font-size:12.2px;color:#e8eaed;">30 ms</div>
<div class="r" style="left:362px;top:371px;width:1px;height:100px;background:#3a3b3e;"></div>
<div class="t" style="right:1561px;top:378.67px;font-size:12.2px;color:#e8eaed;">40 ms</div>
<div class="r" style="left:453px;top:371px;width:1px;height:100px;background:#3a3b3e;"></div>
<div class="t" style="right:1470px;top:378.67px;font-size:12.2px;color:#e8eaed;">50 ms</div>
<div class="r" style="left:544px;top:371px;width:1px;height:100px;background:#3a3b3e;"></div>
<div class="t" style="right:1379px;top:378.67px;font-size:12.2px;color:#e8eaed;">60 ms</div>
<div class="r" style="left:634px;top:371px;width:1px;height:100px;background:#3a3b3e;"></div>
<div class="t" style="right:1289px;top:378.67px;font-size:12.2px;color:#e8eaed;">70 ms</div>
<div class="r" style="left:725px;top:371px;width:1px;height:100px;background:#3a3b3e;"></div>
<div class="t" style="right:1198px;top:378.67px;font-size:12.2px;color:#e8eaed;">80 ms</div>
<div class="r" style="left:816px;top:371px;width:1px;height:100px;background:#3a3b3e;"></div>
<div class="t" style="right:1107px;top:378.67px;font-size:12.2px;color:#e8eaed;">90 ms</div>
<div class="r" style="left:907px;top:371px;width:1px;height:100px;background:#3a3b3e;"></div>
<div class="t" style="right:1016px;top:378.67px;font-size:12.2px;color:#e8eaed;">100 ms</div>
<div class="r" style="left:997px;top:371px;width:1px;height:100px;background:#3a3b3e;"></div>
<div class="t" style="right:926px;top:378.67px;font-size:12.2px;color:#e8eaed;">110 ms</div>
<div class="r" style="left:1088px;top:371px;width:1px;height:100px;background:#3a3b3e;"></div>
<div class="t" style="right:835px;top:378.67px;font-size:12.2px;color:#e8eaed;">120 ms</div>
<div class="r" style="left:1179px;top:371px;width:1px;height:100px;background:#3a3b3e;"></div>
<div class="t" style="right:744px;top:378.67px;font-size:12.2px;color:#e8eaed;">130 ms</div>
<div class="r" style="left:1269px;top:371px;width:1px;height:100px;background:#3a3b3e;"></div>
<div class="t" style="right:654px;top:378.67px;font-size:12.2px;color:#e8eaed;">140 ms</div>
<div class="r" style="left:1360px;top:371px;width:1px;height:100px;background:#3a3b3e;"></div>
<div class="t" style="right:563px;top:378.67px;font-size:12.2px;color:#e8eaed;">150 ms</div>
<div class="r" style="left:1451px;top:371px;width:1px;height:100px;background:#3a3b3e;"></div>
<div class="t" style="right:472px;top:378.67px;font-size:12.2px;color:#e8eaed;">160 ms</div>
<div class="r" style="left:1542px;top:371px;width:1px;height:100px;background:#3a3b3e;"></div>
<div class="t" style="right:381px;top:378.67px;font-size:12.2px;color:#e8eaed;">170 ms</div>
<div class="r" style="left:1632px;top:371px;width:1px;height:100px;background:#3a3b3e;"></div>
<div class="t" style="right:291px;top:378.67px;font-size:12.2px;color:#e8eaed;">180 ms</div>
<div class="r" style="left:1723px;top:371px;width:1px;height:100px;background:#3a3b3e;"></div>
<div class="t" style="right:200px;top:378.67px;font-size:12.2px;color:#e8eaed;">190 ms</div>
<div class="r" style="left:1814px;top:371px;width:1px;height:100px;background:#3a3b3e;"></div>
<div class="t" style="right:109px;top:378.67px;font-size:12.2px;color:#e8eaed;">200 ms</div>
<div class="r" style="left:1904px;top:371px;width:1px;height:100px;background:#3a3b3e;"></div>
<div class="t" style="right:19px;top:378.67px;font-size:12.2px;color:#e8eaed;">210 ms</div>
<div class="r" style="left:-4px;top:371px;width:8px;height:24px;background:#aaaaaa;border:1px solid #f0f0f0;box-sizing:border-box;"></div>
<div class="r" style="left:1914px;top:372px;width:6px;height:22px;background:#aaaaaa;border:1px solid #f0f0f0;box-sizing:border-box;"></div>
<div class="r" style="left:1px;top:406px;width:11px;height:3px;background:#9aa0a6;"></div>
<div class="r" style="left:13px;top:406px;width:3px;height:3px;background:#9aa0a6;"></div>
<div class="r" style="left:17px;top:406px;width:572px;height:3px;background:#3cb44b;"></div>
<div class="r" style="left:588px;top:406px;width:3px;height:3px;background:#4a9be8;"></div>
<div class="r" style="left:803px;top:403px;width:33px;height:3px;background:#9aa0a6;"></div>
<div class="r" style="left:804px;top:400px;width:8px;height:13px;background:#2a6db3;"></div>
<div class="r" style="left:807.5px;top:403px;width:1px;height:6px;background:#62a8e8;"></div>
<div class="r" style="left:1824px;top:403px;width:31px;height:3px;background:#9aa0a6;"></div>
<div class="r" style="left:1005px;top:396px;width:2px;height:75px;background:#4aa3f0;"></div>
<div class="r" style="left:1782px;top:396px;width:2px;height:75px;background:#c8443e;"></div>
<div class="r" style="left:0px;top:472px;width:248px;height:398px;background:#202124;"></div>
<div class="r" style="left:0px;top:472px;width:1px;height:398px;background:#3f4044;"></div>
<div class="r" style="left:247px;top:472px;width:2px;height:398px;background:#48494c;"></div>
<div class="r" style="left:1px;top:472px;width:246px;height:34px;background:#292a2d;"></div>
<div class="r" style="left:1px;top:506px;width:246px;height:1px;background:#3f4044;"></div>
<div class="t" style="left:6px;top:482.56px;font-size:14.7px;color:#e8eaed;font-weight:normal;font-family:'Liberation Sans', sans-serif;">Name</div>
<div class="r" style="left:1px;top:507px;width:246px;height:26.3px;background:#29292b;"></div>
<div class="t" style="left:32px;top:512.82px;font-size:15.1px;color:#e8eaed;font-weight:normal;font-family:'Liberation Sans', sans-serif;">ec2-tinnakorn.cmth.work</div>
<svg class="r" style="left:10px;top:512px" width="15" height="16" viewBox="0 0 15 16"><rect x="1" y="0.8" width="12.5" height="14.5" rx="1.5" stroke="#4b8df0" stroke-width="1.5" fill="none"/><rect x="3.5" y="4" width="7.5" height="1.4" fill="#4b8df0"/><rect x="3.5" y="7.2" width="7.5" height="1.4" fill="#4b8df0"/><rect x="3.5" y="10.4" width="7.5" height="1.4" fill="#4b8df0"/></svg>
<div class="r" style="left:1px;top:533.5px;width:246px;height:26.3px;background:#474747;"></div>
<div class="t" style="left:32px;top:539.22px;font-size:15.1px;color:#e8eaed;font-weight:normal;font-family:'Liberation Sans', sans-serif;">home_edit.png</div>
<svg class="r" style="left:11px;top:541.5px" width="13" height="9" viewBox="0 0 13 9"><rect x="0" y="0" width="13" height="9" fill="#f0eef2"/><rect x="3" y="2" width="2" height="5" fill="#c9b0d8"/><rect x="6" y="2" width="2" height="5" fill="#e5a9a0"/><rect x="9" y="2" width="2" height="5" fill="#b0c4e8"/></svg>
<div class="r" style="left:1px;top:560px;width:246px;height:26.3px;background:#29292b;"></div>
<div class="t" style="left:32px;top:565.22px;font-size:15.1px;color:#e8eaed;font-weight:normal;font-family:'Liberation Sans', sans-serif;">about-us.png</div>
<svg class="r" style="left:11px;top:568px" width="13" height="9" viewBox="0 0 13 9"><rect x="0" y="0" width="13" height="9" fill="#f0eef2"/><rect x="3" y="2" width="2" height="5" fill="#c9b0d8"/><rect x="6" y="2" width="2" height="5" fill="#e5a9a0"/><rect x="9" y="2" width="2" height="5" fill="#b0c4e8"/></svg>
<div class="r" style="left:1px;top:586px;width:246px;height:26.3px;background:#242426;"></div>
<div class="t" style="left:32px;top:591.22px;font-size:15.1px;color:#e8eaed;font-weight:normal;font-family:'Liberation Sans', sans-serif;">bootstrap.min.css</div>
<svg class="r" style="left:10px;top:591px" width="15" height="16" viewBox="0 0 15 16"><rect x="1" y="0.8" width="12.5" height="14.5" rx="1.5" stroke="#a661f0" stroke-width="1.5" fill="none"/><path d="M3.5 12 L11 4.5" stroke="#a661f0" stroke-width="2"/></svg>
<div class="r" style="left:1px;top:612px;width:246px;height:26.3px;background:#29292b;"></div>
<div class="t" style="left:32px;top:617.52px;font-size:15.1px;color:#e8eaed;font-weight:normal;font-family:'Liberation Sans', sans-serif;">favicon.ico</div>
<svg class="r" style="left:10px;top:617px" width="15" height="16" viewBox="0 0 15 16"><rect x="1" y="0.8" width="12.5" height="14.5" rx="1.5" stroke="#6e7074" stroke-width="1.5" fill="none"/></svg>
<div class="r" style="left:1px;top:533.5px;width:246px;height:28.5px;background:transparent;border:4px solid #ed1c24;box-sizing:border-box;"></div>
<div class="r" style="left:1px;top:836px;width:246px;height:1px;background:#3f4044;"></div>
<div class="r" style="left:1px;top:837px;width:246px;height:33px;background:#292a2d;"></div>
<div class="r" style="left:0px;top:870px;width:248px;height:1px;background:#3f4044;"></div>
<div class="t" style="left:14px;top:846.73px;font-size:14.5px;color:#9aa0a6;font-weight:normal;font-family:'Liberation Sans', sans-serif;">5 requests</div>
<div class="r" style="left:93px;top:845px;width:1px;height:20px;background:#4a4b4e;"></div>
<div class="t" style="left:106px;top:846.81px;font-size:14.4px;color:#9aa0a6;font-weight:normal;font-family:'Liberation Sans', sans-serif;">1.8 kB transferred</div>
<div class="r" style="left:233px;top:845px;width:1px;height:20px;background:#4a4b4e;"></div>
<div class="r" style="left:248px;top:472px;width:1672px;height:398px;background:#202124;"></div>
<div class="r" style="left:248px;top:472px;width:1px;height:398px;background:#3f4044;"></div>
<div class="r" style="left:249px;top:472px;width:1671px;height:33px;background:#292a2d;"></div>
<div class="r" style="left:249px;top:505px;width:1671px;height:1px;background:#3f4044;"></div>
<svg class="r" style="left:261px;top:482px" width="10" height="10" viewBox="0 0 10 10"><path d="M0.7 0.7L9.3 9.3M9.3 0.7L0.7 9.3" stroke="#8a8b8e" stroke-width="1.3"/></svg>
<div class="r" style="left:280px;top:472px;width:79px;height:33px;background:#000000;"></div>
<div class="t" style="left:292px;top:481.73px;font-size:14.5px;color:#ffffff;font-weight:normal;font-family:'Liberation Sans', sans-serif;">Headers</div>
<div class="t" style="left:371px;top:481.73px;font-size:14.5px;color:#9aa0a6;font-weight:normal;font-family:'Liberation Sans', sans-serif;">Preview</div>
<div class="t" style="left:446px;top:481.73px;font-size:14.5px;color:#9aa0a6;font-weight:normal;font-family:'Liberation Sans', sans-serif;">Response</div>
<div class="t" style="left:533.5px;top:481.73px;font-size:14.5px;color:#9aa0a6;font-weight:normal;font-family:'Liberation Sans', sans-serif;">Initiator</div>
<div class="t" style="left:610px;top:481.73px;font-size:14.5px;color:#9aa0a6;font-weight:normal;font-family:'Liberation Sans', sans-serif;">Timing</div>
<svg class="r" style="left:257px;top:517px" width="10" height="9" viewBox="0 0 10 9"><path d="M0.5 0.5H9.5L5 8.5Z" fill="#9aa0a6"/></svg>
<div class="t" style="left:270px;top:514.90px;font-size:14.3px;color:#e8eaed;font-weight:bold;font-family:'Liberation Sans', sans-serif;">Response Headers</div>
<div class="r" style="left:1899px;top:506px;width:21px;height:364px;background:#424242;"></div>
<div class="r" style="left:1901px;top:603px;width:16px;height:155px;background:#6b6b6b;"></div>
<svg class="r" style="left:1904px;top:513px" width="11" height="7" viewBox="0 0 11 7"><path d="M0.5 6.5 L5.5 1 L10.5 6.5Z" fill="#e8eaed"/></svg>
<svg class="r" style="left:1904px;top:855px" width="11" height="7" viewBox="0 0 11 7"><path d="M0.5 0.5 L5.5 6 L10.5 0.5Z" fill="#e8eaed"/></svg>
<div class="r" style="left:249px;top:839px;width:1650px;height:26px;background:#2965a6;"></div>
<div class="t" style="left:281.3px;top:544.93px;font-size:14.5px;color:#9aa0a6;font-weight:bold;font-family:'Liberation Sans', sans-serif;">accept-ranges:</div>
<div class="t" style="left:390.6px;top:546.70px;font-size:13.7px;color:#e8eaed;font-family:'Liberation Mono', monospace;">bytes</div>
<div class="t" style="left:281.3px;top:572.18px;font-size:14.5px;color:#9aa0a6;font-weight:bold;font-family:'Liberation Sans', sans-serif;">age:</div>
<div class="t" style="left:318px;top:573.95px;font-size:13.7px;color:#e8eaed;font-family:'Liberation Mono', monospace;">3</div>
<div class="t" style="left:281.3px;top:599.43px;font-size:14.5px;color:#9aa0a6;font-weight:bold;font-family:'Liberation Sans', sans-serif;">content-length:</div>
<div class="t" style="left:397.7px;top:601.20px;font-size:13.7px;color:#e8eaed;font-family:'Liberation Mono', monospace;">77406</div>
<div class="t" style="left:281.3px;top:626.68px;font-size:14.5px;color:#9aa0a6;font-weight:bold;font-family:'Liberation Sans', sans-serif;">content-type:</div>
<div class="t" style="left:384.3px;top:628.45px;font-size:13.7px;color:#e8eaed;font-family:'Liberation Mono', monospace;">image/png</div>
<div class="t" style="left:281.3px;top:653.93px;font-size:14.5px;color:#9aa0a6;font-weight:bold;font-family:'Liberation Sans', sans-serif;">date:</div>
<div class="t" style="left:323.6px;top:655.70px;font-size:13.7px;color:#e8eaed;font-family:'Liberation Mono', monospace;">Wed, 03 Nov 2021 10:50:16 GMT</div>
<div class="t" style="left:281.3px;top:681.18px;font-size:14.5px;color:#9aa0a6;font-weight:bold;font-family:'Liberation Sans', sans-serif;">etag:</div>
<div class="t" style="left:324.3px;top:682.95px;font-size:13.7px;color:#e8eaed;font-family:'Liberation Mono', monospace;">"12e5e-5c334c302a740"</div>
<div class="t" style="left:281.3px;top:708.43px;font-size:14.5px;color:#9aa0a6;font-weight:bold;font-family:'Liberation Sans', sans-serif;">last-modified:</div>
<div class="t" style="left:386.3px;top:710.20px;font-size:13.7px;color:#e8eaed;font-family:'Liberation Mono', monospace;">Wed, 26 May 2021 05:17:41 GMT</div>
<div class="t" style="left:281.3px;top:735.68px;font-size:14.5px;color:#9aa0a6;font-weight:bold;font-family:'Liberation Sans', sans-serif;">server:</div>
<div class="t" style="left:336.5px;top:737.45px;font-size:13.7px;color:#e8eaed;font-family:'Liberation Mono', monospace;">Apache/2.4.48 () PHP/8.0.8</div>
<div class="t" style="left:281.3px;top:762.93px;font-size:14.5px;color:#9aa0a6;font-weight:bold;font-family:'Liberation Sans', sans-serif;">via:</div>
<div class="t" style="left:313.2px;top:764.70px;font-size:13.7px;color:#e8eaed;font-family:'Liberation Mono', monospace;">1.1 8e3e05242a0bb7a7c9e15f68f02277ca.cloudfront.net (CloudFront)</div>
<div class="t" style="left:281.3px;top:790.18px;font-size:14.5px;color:#9aa0a6;font-weight:bold;font-family:'Liberation Sans', sans-serif;">x-amz-cf-id:</div>
<div class="t" style="left:373.2px;top:791.95px;font-size:13.7px;color:#e8eaed;font-family:'Liberation Mono', monospace;">f0edgCremsyq6iI9UkwKqKJfCHATLz7FQBQwAXBOrwI9Sy7KEEC5mA==</div>
<div class="t" style="left:281.3px;top:817.43px;font-size:14.5px;color:#9aa0a6;font-weight:bold;font-family:'Liberation Sans', sans-serif;">x-amz-cf-pop:</div>
<div class="t" style="left:388px;top:819.20px;font-size:13.7px;color:#e8eaed;font-family:'Liberation Mono', monospace;">BKK50-C2</div>
<div class="t" style="left:281.3px;top:844.68px;font-size:14.5px;color:#e8eaed;font-weight:bold;font-family:'Liberation Sans', sans-serif;">x-cache:</div>
<div class="t" style="left:346.5px;top:846.45px;font-size:13.7px;color:#d5dae0;font-family:'Liberation Mono', monospace;">Hit from cloudfront</div>
<div class="r" style="left:0px;top:871px;width:1920px;height:34px;background:#292a2d;"></div>
<div class="r" style="left:0px;top:905px;width:1920px;height:1px;background:#3f4044;"></div>
<div class="r" style="left:19px;top:880.5px;width:4px;height:4px;background:#9aa0a6;border-radius:50%;"></div>
<div class="r" style="left:19px;top:887.5px;width:4px;height:4px;background:#9aa0a6;border-radius:50%;"></div>
<div class="r" style="left:19px;top:894.5px;width:4px;height:4px;background:#9aa0a6;border-radius:50%;"></div>
<div class="t" style="left:47px;top:882.56px;font-size:14.7px;color:#9aa0a6;font-weight:normal;font-family:'Liberation Sans', sans-serif;">Console</div>
<div class="r" style="left:113px;top:871px;width:76px;height:34px;background:#000000;"></div>
<div class="t" style="left:124.5px;top:882.90px;font-size:14.3px;color:#ffffff;font-weight:normal;font-family:'Liberation Sans', sans-serif;">Issues</div>
<svg class="r" style="left:172.5px;top:883px" width="10" height="10" viewBox="0 0 10 10"><path d="M1 1L9 9M9 1L1 9" stroke="#ffffff" stroke-width="1.8"/></svg>
<div class="t" style="left:200.5px;top:882.39px;font-size:14.9px;color:#9aa0a6;font-weight:normal;font-family:'Liberation Sans', sans-serif;">What's New</div>
<svg class="r" style="left:1894px;top:882px" width="13" height="13" viewBox="0 0 13 13"><path d="M0.8 0.8L12.2 12.2M12.2 0.8L0.8 12.2" stroke="#9aa0a6" stroke-width="1.8"/></svg>
<div class="r" style="left:0px;top:906px;width:1920px;height:33px;background:#292a2d;"></div>
<div class="r" style="left:1545px;top:915px;width:15px;height:15px;background:#ababab;border-radius:2.5px;"></div>
<div class="t" style="left:1567.5px;top:915.84px;font-size:14.95px;color:#9aa0a6;font-weight:normal;font-family:'Liberation Sans', sans-serif;">Include third-party cookie issues</div>
<div class="r" style="left:1793px;top:912px;width:1px;height:21px;background:#4a4b4e;"></div>
<svg class="r" style="left:1807px;top:915px" width="14" height="14" viewBox="0 0 14 14"><path d="M1 0.5H13A0.5 .5 0 0 1 13.5 1V10.5H3.5L1 13.5V1A.5 .5 0 0 1 1 0.5Z" fill="#e8383d"/><path d="M5 3L9.5 7.5M9.5 3L5 7.5" stroke="#292a2d" stroke-width="1.3"/></svg>
<div class="t" style="left:1825px;top:915.84px;font-size:14.95px;color:#9aa0a6;font-weight:normal;font-family:'Liberation Sans', sans-serif;">0</div>
<svg class="r" style="left:1841px;top:915px" width="14" height="14" viewBox="0 0 14 14"><path d="M1 0.5H13A0.5 .5 0 0 1 13.5 1V10.5H3.5L1 13.5V1A.5 .5 0 0 1 1 0.5Z" fill="#f29900"/><rect x="6.3" y="2.3" width="1.6" height="4.6" fill="#292a2d"/><rect x="6.3" y="7.8" width="1.6" height="1.6" fill="#292a2d"/></svg>
<div class="t" style="left:1859px;top:915.84px;font-size:14.95px;color:#9aa0a6;font-weight:normal;font-family:'Liberation Sans', sans-serif;">0</div>
<svg class="r" style="left:1875px;top:915px" width="14" height="14" viewBox="0 0 14 14"><path d="M1 0.5H13A0.5 .5 0 0 1 13.5 1V10.5H3.5L1 13.5V1A.5 .5 0 0 1 1 0.5Z" fill="#3b82f0"/><rect x="3" y="3" width="8" height="1.3" fill="#292a2d"/><rect x="3" y="5.8" width="5" height="1.3" fill="#292a2d"/></svg>
<div class="t" style="left:1893px;top:915.84px;font-size:14.95px;color:#9aa0a6;font-weight:normal;font-family:'Liberation Sans', sans-serif;">1</div>
<div class="r" style="left:0px;top:939px;width:1920px;height:37px;background:#3a4354;"></div>
<svg class="r" style="left:12px;top:954px" width="8" height="10" viewBox="0 0 8 10"><path d="M0.5 0.5L7.5 5L0.5 9.5Z" fill="#9aa0a6"/></svg>
<svg class="r" style="left:33px;top:950px" width="18" height="18" viewBox="0 0 18 18"><path d="M2 0.5H16A1.5 1.5 0 0 1 17.5 2V12A1.5 1.5 0 0 1 16 13.5H5L1 17.5V2A1.5 1.5 0 0 1 2 0.5Z" fill="#3b82f0"/><rect x="3.5" y="3.8" width="10.5" height="1.8" fill="#3a4354"/><rect x="3.5" y="7.5" width="7" height="1.8" fill="#3a4354"/></svg>
<div class="r" style="left:61px;top:950px;width:24px;height:18px;background:transparent;border:1.2px solid #5e7fa3;border-radius:9px;box-sizing:border-box;"></div>
<div class="t" style="left:69px;top:953.50px;font-size:13px;color:#e8eaed;font-weight:normal;font-family:'Liberation Sans', sans-serif;">1</div>
<div class="t" style="left:94.5px;top:950.99px;font-size:17.5px;color:#e8eaed;font-weight:normal;font-family:'Liberation Sans', sans-serif;">Audit usage of navigator.userAgent, navigator.appVersion, and navigator.platform</div>
<div class="r" style="left:1899px;top:939px;width:21px;height:37px;background:#424242;"></div>
<svg class="r" style="left:1904px;top:948px" width="11" height="7" viewBox="0 0 11 7"><path d="M0.5 6.5 L5.5 1 L10.5 6.5Z" fill="#6b6b6b"/></svg>
<svg class="r" style="left:1904px;top:964px" width="11" height="7" viewBox="0 0 11 7"><path d="M0.5 0.5 L5.5 6 L10.5 0.5Z" fill="#e8eaed"/></svg>
</body></html>
